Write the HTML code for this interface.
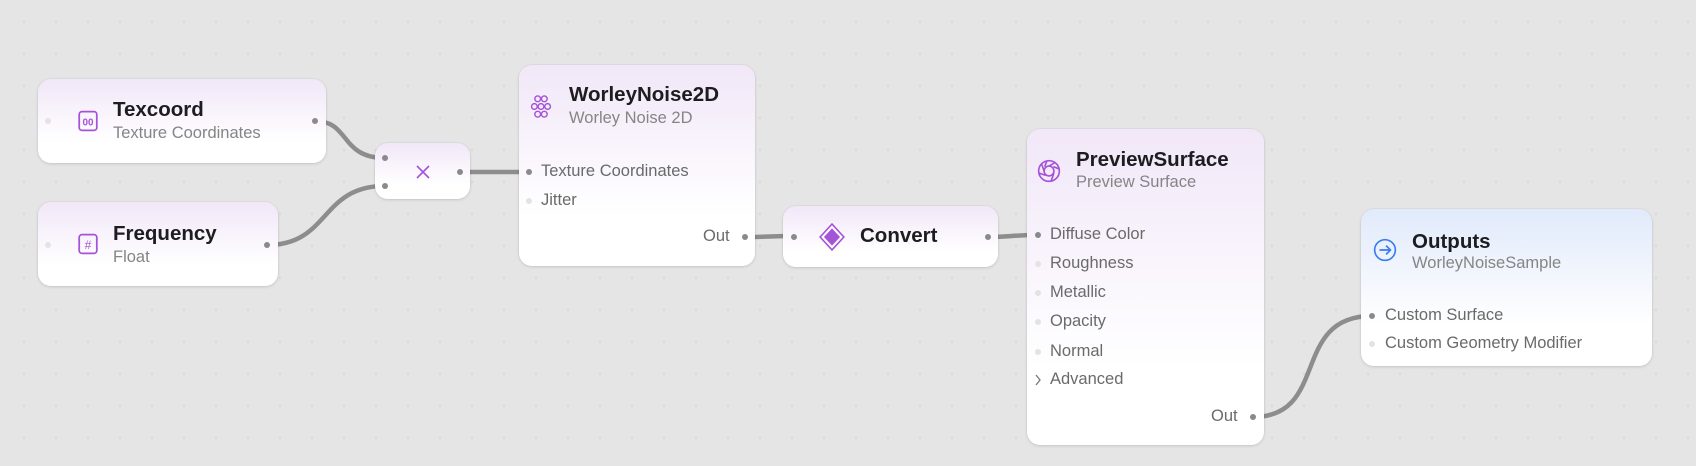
<!DOCTYPE html>
<html><head><meta charset="utf-8"><style>
html,body{margin:0;padding:0}
body{width:1696px;height:466px;overflow:hidden;position:relative;background-color:#e5e5e5;
background-image:radial-gradient(circle,#dadada 1.1px,transparent 1.5px);background-size:32px 32px;background-position:8px 6px;
font-family:"Liberation Sans",sans-serif}
.n{position:absolute;border-radius:13px;background:linear-gradient(#f1e7f8,#ffffff 75%);box-shadow:0 1px 3px rgba(0,0,0,.12),0 0 0 .5px rgba(0,0,0,.05)}
.b{background:linear-gradient(#e1eafb,#ffffff 75%)}
.t{position:absolute;font-size:20.5px;font-weight:bold;color:#1d1d1f;white-space:nowrap}
.s{position:absolute;font-size:16.5px;color:#858585;white-space:nowrap}
.p{position:absolute;font-size:16.5px;color:#6a6a6a;white-space:nowrap;line-height:18px}
.d{position:absolute;width:6px;height:6px;border-radius:50%;background:#8a8a8a}
.e{background:#e3e3e3}
svg{position:absolute;left:0;top:0}
</style></head><body>
<svg width="1696" height="466" style="z-index:0">
<g fill="none" stroke="#8d8d8d" stroke-width="4.5" stroke-linecap="round">
<path d="M315 121 C350 121,340 158,385 158"/>
<path d="M267 245 C330 245,320 186,385 186"/>
<path d="M460 172 L529 172"/>
<path d="M745 237 C770 237,770 236,794 236"/>
<path d="M988 237 C1012 237,1012 235,1038 235"/>
<path d="M1253 417 C1330 417,1290 316,1372 316"/>
</g></svg>

<div class="n" style="left:38px;top:79px;width:288px;height:84px"></div>
<div class="d e" style="left:45px;top:118px"></div>
<svg style="left:77px;top:110px" width="22" height="22" viewBox="0 0 20 20"><rect x="2" y="1.5" width="16" height="17" rx="2.5" fill="none" stroke="#a553d8" stroke-width="1.6"/><text x="10" y="14" font-size="9" font-family="Liberation Sans" fill="#a553d8" text-anchor="middle" font-weight="bold">00</text></svg>
<div class="t" style="left:113px;top:98px">Texcoord</div>
<div class="s" style="left:113px;top:124px">Texture Coordinates</div>
<div class="d" style="left:312px;top:118px"></div>

<div class="n" style="left:38px;top:202px;width:240px;height:84px"></div>
<div class="d e" style="left:45px;top:242px"></div>
<svg style="left:77px;top:233px" width="22" height="22" viewBox="0 0 20 20"><rect x="2" y="1.5" width="16" height="17" rx="2.5" fill="none" stroke="#a553d8" stroke-width="1.6"/><text x="10" y="14.5" font-size="11" font-family="Liberation Sans" fill="#a553d8" text-anchor="middle">#</text></svg>
<div class="t" style="left:113px;top:222px">Frequency</div>
<div class="s" style="left:113px;top:248px">Float</div>
<div class="d" style="left:264px;top:242px"></div>

<div class="n" style="left:375px;top:143px;width:95px;height:56px"></div>
<div class="d" style="left:382px;top:155px"></div>
<div class="d" style="left:382px;top:183px"></div>
<svg style="left:415px;top:164px" width="16" height="16"><path d="M2 2 L14 14 M14 2 L2 14" stroke="#a553d8" stroke-width="1.6"/></svg>
<div class="d" style="left:457px;top:169px"></div>

<div class="n" style="left:519px;top:65px;width:236px;height:201px"></div>
<svg style="left:530px;top:94px" width="22" height="25" viewBox="0 0 20 22" fill="none" stroke="#a553d8" stroke-width="1.3"><circle cx="7" cy="4" r="2.6"/><circle cx="13" cy="4" r="2.6"/><circle cx="4" cy="11" r="2.6"/><circle cx="10" cy="11" r="2.6"/><circle cx="16" cy="11" r="2.6"/><circle cx="7" cy="18" r="2.6"/><circle cx="13" cy="18" r="2.6"/></svg>
<div class="t" style="left:569px;top:83px">WorleyNoise2D</div>
<div class="s" style="left:569px;top:109px">Worley Noise 2D</div>
<div class="d" style="left:526px;top:169px"></div>
<div class="p" style="left:541px;top:162px">Texture Coordinates</div>
<div class="d e" style="left:526px;top:198px"></div>
<div class="p" style="left:541px;top:191px">Jitter</div>
<div class="p" style="left:703px;top:227px">Out</div>
<div class="d" style="left:742px;top:234px"></div>

<div class="n" style="left:783px;top:206px;width:215px;height:61px"></div>
<div class="d" style="left:791px;top:234px"></div>
<svg style="left:819px;top:223px" width="26" height="28" viewBox="0 0 24 26"><path d="M12 1 L23 13 L12 25 L1 13 Z" fill="#fff" stroke="#a553d8" stroke-width="1.5"/><path d="M12 5 L19.5 13 L12 21 L4.5 13 Z" fill="#a553d8"/></svg>
<div class="t" style="left:860px;top:224px">Convert</div>
<div class="d" style="left:985px;top:234px"></div>

<div class="n" style="left:1027px;top:129px;width:237px;height:316px"></div>
<svg style="left:1037px;top:159px" width="24" height="24" viewBox="0 0 22 22" fill="none" stroke="#a553d8" stroke-width="1.5"><circle cx="11" cy="11" r="9.5"/><circle cx="11" cy="11" r="4.5"/><path d="M7 7 L9 2 M15 7 L20 9 M15.5 13 L13 20 M8 15 L2 13 M11 6.5 L17 3 M6.5 11 L4 4"/></svg>
<div class="t" style="left:1076px;top:148px">PreviewSurface</div>
<div class="s" style="left:1076px;top:173px">Preview Surface</div>
<div class="d" style="left:1035px;top:232px"></div><div class="p" style="left:1050px;top:225px">Diffuse Color</div>
<div class="d e" style="left:1035px;top:261px"></div><div class="p" style="left:1050px;top:254px">Roughness</div>
<div class="d e" style="left:1035px;top:290px"></div><div class="p" style="left:1050px;top:283px">Metallic</div>
<div class="d e" style="left:1035px;top:319px"></div><div class="p" style="left:1050px;top:312px">Opacity</div>
<div class="d e" style="left:1035px;top:349px"></div><div class="p" style="left:1050px;top:342px">Normal</div>
<svg style="left:1034px;top:373px" width="8" height="14"><path d="M2 2 L6 7 L2 12" fill="none" stroke="#777" stroke-width="1.3"/></svg>
<div class="p" style="left:1050px;top:370px">Advanced</div>
<div class="p" style="left:1211px;top:407px">Out</div>
<div class="d" style="left:1250px;top:414px"></div>

<div class="n b" style="left:1361px;top:209px;width:291px;height:157px"></div>
<svg style="left:1373px;top:238px" width="24" height="24" viewBox="0 0 22 22" fill="none" stroke="#3a7cf0" stroke-width="1.5"><circle cx="11" cy="11" r="9.5"/><path d="M6 11 H16 M12 7 L16 11 L12 15"/></svg>
<div class="t" style="left:1412px;top:230px">Outputs</div>
<div class="s" style="left:1412px;top:254px">WorleyNoiseSample</div>
<div class="d" style="left:1369px;top:313px"></div><div class="p" style="left:1385px;top:306px">Custom Surface</div>
<div class="d e" style="left:1369px;top:341px"></div><div class="p" style="left:1385px;top:334px">Custom Geometry Modifier</div>
</body></html>
